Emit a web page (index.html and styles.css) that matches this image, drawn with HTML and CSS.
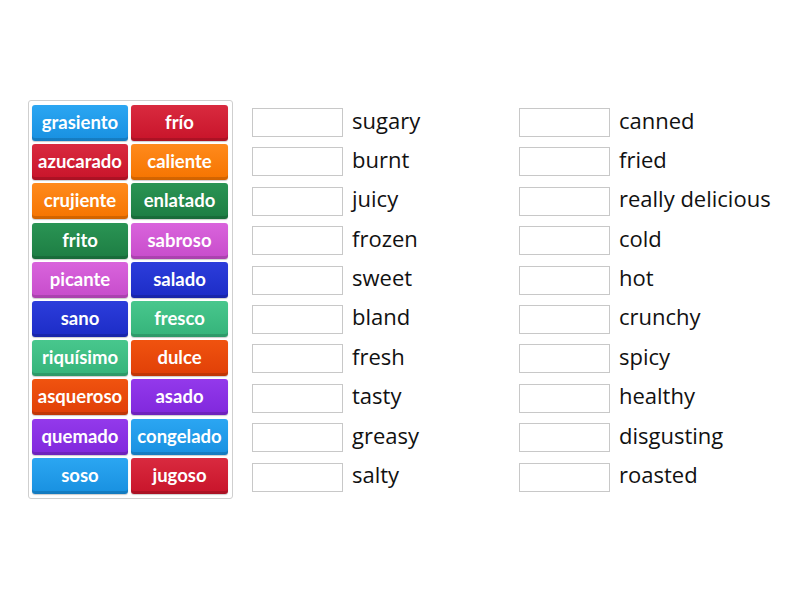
FILE: index.html
```html
<!DOCTYPE html>
<html lang="es">
<head>
<meta charset="utf-8">
<title>Match</title>
<link rel="stylesheet" href="styles.css">
</head>
<body>
<div class="page">
  <div class="panel">
    <div class="tile blue">grasiento</div>
    <div class="tile red">frío</div>
    <div class="tile red">azucarado</div>
    <div class="tile orange">caliente</div>
    <div class="tile orange">crujiente</div>
    <div class="tile green">enlatado</div>
    <div class="tile green">frito</div>
    <div class="tile pink">sabroso</div>
    <div class="tile pink">picante</div>
    <div class="tile navy">salado</div>
    <div class="tile navy">sano</div>
    <div class="tile teal">fresco</div>
    <div class="tile teal">riquísimo</div>
    <div class="tile vermilion">dulce</div>
    <div class="tile vermilion">asqueroso</div>
    <div class="tile purple">asado</div>
    <div class="tile purple">quemado</div>
    <div class="tile blue">congelado</div>
    <div class="tile blue">soso</div>
    <div class="tile red">jugoso</div>
  </div>
  <div class="col">
    <div class="item"><span class="box"></span><span class="word">sugary</span></div>
    <div class="item"><span class="box"></span><span class="word">burnt</span></div>
    <div class="item"><span class="box"></span><span class="word">juicy</span></div>
    <div class="item"><span class="box"></span><span class="word">frozen</span></div>
    <div class="item"><span class="box"></span><span class="word">sweet</span></div>
    <div class="item"><span class="box"></span><span class="word">bland</span></div>
    <div class="item"><span class="box"></span><span class="word">fresh</span></div>
    <div class="item"><span class="box"></span><span class="word">tasty</span></div>
    <div class="item"><span class="box"></span><span class="word">greasy</span></div>
    <div class="item"><span class="box"></span><span class="word">salty</span></div>
  </div>
  <div class="col">
    <div class="item"><span class="box"></span><span class="word">canned</span></div>
    <div class="item"><span class="box"></span><span class="word">fried</span></div>
    <div class="item"><span class="box"></span><span class="word">really delicious</span></div>
    <div class="item"><span class="box"></span><span class="word">cold</span></div>
    <div class="item"><span class="box"></span><span class="word">hot</span></div>
    <div class="item"><span class="box"></span><span class="word">crunchy</span></div>
    <div class="item"><span class="box"></span><span class="word">spicy</span></div>
    <div class="item"><span class="box"></span><span class="word">healthy</span></div>
    <div class="item"><span class="box"></span><span class="word">disgusting</span></div>
    <div class="item"><span class="box"></span><span class="word">roasted</span></div>
  </div>
</div>
</body>
</html>
```
FILE: styles.css
```css
html, body {
  margin: 0;
  padding: 0;
  background: #ffffff;
}
.page {
  display: flex;
  align-items: flex-start;
  padding: 100px 0 0 28px;
  font-family: "Open Sans", "Liberation Sans", sans-serif;
}
.panel {
  display: grid;
  grid-template-columns: 96px 97px;
  grid-auto-rows: 36px;
  column-gap: 3px;
  row-gap: 3.2px;
  padding: 4px 4px 4px 3px;
  border: 1px solid #cfcfcf;
  border-radius: 3px;
}
.tile {
  display: flex;
  align-items: center;
  justify-content: center;
  color: #ffffff;
  font-family: "Lato", "Open Sans", sans-serif;
  font-weight: 700;
  font-size: 18.5px;
  border-radius: 3px;
  box-shadow: inset 0 -3px 0 rgba(0, 0, 0, 0.14), 0 1px 1px rgba(0, 0, 0, 0.2);
  padding-bottom: 2px;
  box-sizing: border-box;
}
.blue { background: linear-gradient(#2ba6f2, #1890e0); }
.red { background: linear-gradient(#d92a3f, #c8142a); }
.orange { background: linear-gradient(#ff8a1c, #f57400); }
.green { background: linear-gradient(#2a9454, #1d7d43); }
.pink { background: linear-gradient(#d964dc, #c74ccb); }
.navy { background: linear-gradient(#2c3ddb, #1c2cc6); }
.teal { background: linear-gradient(#48c78d, #35b37a); }
.vermilion { background: linear-gradient(#f0530f, #e03f07); }
.purple { background: linear-gradient(#9339eb, #8028dc); }
.col {
  display: flex;
  flex-direction: column;
  width: 267px;
  padding-top: 8px;
}
.panel + .col { margin-left: 19px; }
.item {
  display: flex;
  align-items: center;
  height: 29px;
  margin-bottom: 10.4px;
}
.box {
  width: 89px;
  height: 27px;
  border: 1px solid #c8c8c8;
  flex: none;
}
.word {
  margin-left: 9px;
  font-size: 22px;
  color: #111111;
  line-height: 29px;
  margin-top: -5px;
}
```
